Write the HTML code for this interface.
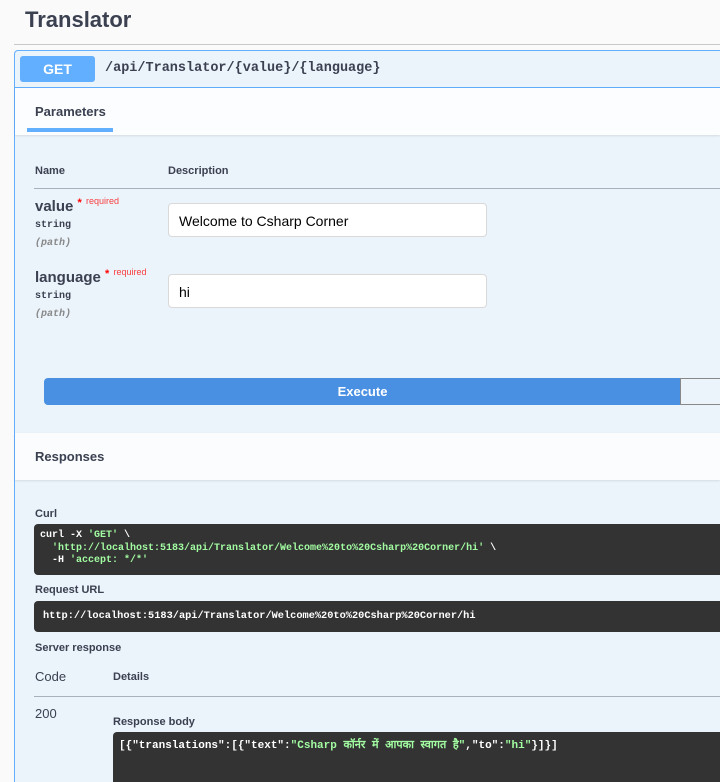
<!DOCTYPE html>
<html><head><meta charset="utf-8"><style>
*{box-sizing:border-box;margin:0;padding:0}
html,body{width:720px;height:782px;overflow:hidden}
body{background:#fafafa;font-family:"Liberation Sans",sans-serif;color:#3b4151;position:relative}
.a{position:absolute;white-space:nowrap}
.mono{font-family:"Liberation Mono","DejaVu Sans Mono",monospace}
.code{background:#333;color:#fff;font-family:"Liberation Mono","Noto Sans CJK SC",monospace;font-size:10px;font-weight:bold;border-radius:4px}
.g{color:#a2fca2}
</style></head><body>
<div class="a" style="left:25px;top:7px;font-size:22px;font-weight:bold">Translator</div>
<div class="a" style="left:14px;top:44px;width:706px;height:1px;background:#c8c8c8"></div>
<div class="a" style="left:14px;top:50px;width:720px;height:760px;background:#ebf3fb;border:1px solid #61affe;border-radius:4px"></div>
<div class="a" style="left:15px;top:87px;width:705px;height:1px;background:#61affe"></div>
<div class="a" style="left:20px;top:56px;width:75px;height:26px;background:#61affe;border-radius:3px;color:#fff;font-weight:bold;font-size:14px;text-align:center;line-height:26px">GET</div>
<div class="a mono" style="left:105px;top:61px;font-size:13.5px;font-weight:bold">/api/Translator/{value}/{language}</div>
<div class="a" style="left:15px;top:88px;width:705px;height:47px;background:#fcfdfe;box-shadow:0 1px 2px rgba(0,0,0,.1)"></div>
<div class="a" style="left:35px;top:104px;font-size:13px;font-weight:bold">Parameters</div>
<div class="a" style="left:27px;top:128px;width:86px;height:4px;background:#61affe"></div>
<div class="a" style="left:35px;top:165px;font-size:11px;font-weight:bold">Name</div>
<div class="a" style="left:168px;top:165px;font-size:11px;font-weight:bold">Description</div>
<div class="a" style="left:34px;top:188px;width:686px;height:1px;background:#a9b0bd"></div>
<div class="a" style="left:35px;top:198px;font-size:15px;font-weight:bold">value <span style="color:#f00;font-size:11px;position:relative;top:-5px">*</span> <span style="color:#f93e3e;font-size:9px;position:relative;top:-7px;font-weight:normal">required</span></div>
<div class="a mono" style="left:35px;top:220px;font-size:10px;font-weight:bold">string</div>
<div class="a mono" style="left:35px;top:238px;font-size:10px;font-style:italic;color:#888;font-weight:bold">(path)</div>
<div class="a" style="left:168px;top:203px;width:319px;height:34px;background:#fff;border:1px solid #d9d9d9;border-radius:4px;font-size:14px;padding:9px 10px;color:#000">Welcome to Csharp Corner</div>
<div class="a" style="left:35px;top:269px;font-size:15px;font-weight:bold">language <span style="color:#f00;font-size:11px;position:relative;top:-5px">*</span> <span style="color:#f93e3e;font-size:9px;position:relative;top:-7px;font-weight:normal">required</span></div>
<div class="a mono" style="left:35px;top:291px;font-size:10px;font-weight:bold">string</div>
<div class="a mono" style="left:35px;top:309px;font-size:10px;font-style:italic;color:#888;font-weight:bold">(path)</div>
<div class="a" style="left:168px;top:274px;width:319px;height:34px;background:#fff;border:1px solid #d9d9d9;border-radius:4px;font-size:14px;padding:9px 10px;color:#000">hi</div>
<div class="a" style="left:44px;top:378px;width:637px;height:27px;background:#4990e2;border-radius:4px 0 0 4px;color:#fff;font-weight:bold;font-size:13px;text-align:center;line-height:27px">Execute</div>
<div class="a" style="left:680px;top:378px;width:60px;height:27px;border:1px solid #888"></div>
<div class="a" style="left:15px;top:433px;width:705px;height:47px;background:#fafcfe;box-shadow:0 1px 2px rgba(0,0,0,.1)"></div>
<div class="a" style="left:35px;top:449px;font-size:13px;font-weight:bold">Responses</div>
<div class="a" style="left:35px;top:508px;font-size:11px;font-weight:bold">Curl</div>
<div class="a code" style="left:34px;top:524px;width:700px;height:51px;padding:6px 6px;line-height:12.5px;white-space:pre">curl -X <span class="g">'GET'</span> \
  <span class="g">'http://localhost:5183/api/Translator/Welcome%20to%20Csharp%20Corner/hi'</span> \
  -H <span class="g">'accept: */*'</span></div>
<div class="a" style="left:35px;top:584px;font-size:11px;font-weight:bold">Request URL</div>
<div class="a code" style="left:34px;top:601px;width:700px;height:31px;padding:9px 9px;line-height:13px;font-size:10.3px">http://localhost:5183/api/Translator/Welcome%20to%20Csharp%20Corner/hi</div>
<div class="a" style="left:35px;top:642px;font-size:11px;font-weight:bold">Server response</div>
<div class="a" style="left:35px;top:669px;font-size:13px">Code</div>
<div class="a" style="left:113px;top:671px;font-size:11px;font-weight:bold">Details</div>
<div class="a" style="left:34px;top:696px;width:686px;height:1px;background:#a9b0bd"></div>
<div class="a" style="left:35px;top:706px;font-size:13px">200</div>
<div class="a" style="left:113px;top:716px;font-size:11px;font-weight:bold">Response body</div>
<div class="a code" style="left:113px;top:732px;width:620px;height:60px;padding:7px 6px;line-height:14px;border-radius:4px 0 0 0;font-size:11px;font-family:'Liberation Mono','Noto Sans CJK SC','DejaVu Sans',monospace">[{"translations":[{"text":<span class="g">"Csharp कॉर्नर में आपका स्वागत है"</span>,"to":<span class="g">"hi"</span>}]}]</div>
</body></html>
